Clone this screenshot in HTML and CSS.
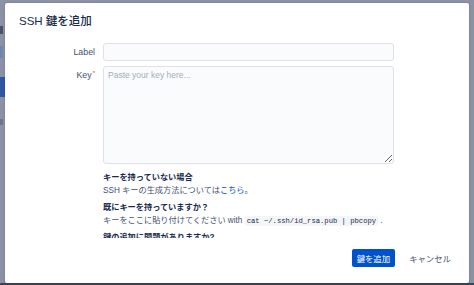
FILE: index.html
```html
<!DOCTYPE html>
<html lang="ja">
<head>
  <meta charset="UTF-8">
  <meta name="viewport" content="width=device-width, initial-scale=1.0">
  <title>SSH 鍵を追加</title>
  <link rel="stylesheet" href="styles.css">
</head>
<body>
  <div class="screen">
    <div class="page-edge">
      <span class="edge-glyph"></span>
      <span class="edge-link"></span>
      <span class="edge-button"></span>
      <span class="edge-glyph small"></span>
    </div>

    <div class="dialog">
      <div class="dialog-header">
        <h2>SSH 鍵を追加</h2>
      </div>

      <div class="dialog-body">
        <form class="key-form">
          <label for="keyLabel">Label</label>
          <input id="keyLabel" type="text">

          <label for="keyText">Key<span class="req">*</span></label>
          <textarea id="keyText" placeholder="Paste your key here..."></textarea>

          <div class="help">
            <p><strong>キーを持っていない場合</strong><br>
              SSH キーの生成方法については<a href="#">こちら</a>。</p>
            <p><strong>既にキーを持っていますか？</strong><br>
              キーをここに貼り付けてください with <code>cat ~/.ssh/id_rsa.pub | pbcopy</code> .</p>
            <p><strong>鍵の追加に問題がありますか?</strong><br>
              詳細についてはトラブルシューティングをご覧ください。</p>
          </div>
        </form>
      </div>

      <div class="dialog-footer">
        <button class="btn primary">鍵を追加</button>
        <button class="btn link">キャンセル</button>
      </div>
    </div>
  </div>
</body>
</html>
```

FILE: styles.css
```css
* { box-sizing: border-box; }
html, body {
  margin: 0;
  height: 100%;
}
body {
  font-family: 'Liberation Sans', 'Noto Sans CJK JP', sans-serif;
  background: #8b92a4;
  color: #172b4d;
  overflow: hidden;
}
.screen {
  display: flex;
  height: 285px;
  border-bottom: 2px solid #3b4456;
}
.page-edge {
  width: 5px;
  display: flex;
  flex-direction: column;
  padding-top: 26px;
}
.edge-glyph {
  display: block;
  width: 3px;
  height: 8px;
  background: #4a5266;
}
.edge-glyph.small {
  margin-top: 22px;
  height: 6px;
  background: #6c7487;
}
.edge-link {
  display: block;
  width: 3px;
  height: 12px;
  margin-top: 12px;
  background: #6f86ad;
}
.edge-button {
  display: block;
  width: 5px;
  height: 20px;
  margin-top: 19px;
  background: #2f57a6;
}
.dialog {
  width: 464px;
  height: 280px;
  margin-top: 3px;
  background: #fff;
  border-radius: 2px;
  box-shadow: 0 0 2px rgba(9, 30, 66, 0.3);
  display: flex;
  flex-direction: column;
}
.dialog-header {
  padding: 11px 14px 0;
  height: 36px;
}
.dialog-header h2 {
  margin: 0;
  font-size: 11.5px;
  line-height: 15px;
  font-weight: 500;
  color: #172b4d;
}
.dialog-body {
  flex: 1;
  overflow: hidden;
  padding: 4px 0 0;
}
.key-form {
  display: grid;
  grid-template-columns: 90px 291px;
  column-gap: 8px;
  row-gap: 5px;
  align-items: start;
}
.key-form label {
  text-align: right;
  font-size: 8.8px;
  line-height: 18px;
  color: #42526e;
}
.key-form label .req {
  color: #de350b;
  font-size: 6px;
  vertical-align: top;
  line-height: 14px;
  margin-left: 1px;
}
.key-form input,
.key-form textarea {
  width: 100%;
  background: #fafbfc;
  border: 1px solid #dfe1e6;
  border-radius: 3px;
  font-family: inherit;
  font-size: 8.5px;
  color: #172b4d;
  margin: 0;
}
.key-form input {
  height: 18px;
  padding: 0 4px;
}
.key-form textarea {
  height: 98px;
  padding: 3px 4px;
  line-height: 11px;
}
.key-form textarea::placeholder {
  color: #a5adba;
}
.help {
  grid-column: 2;
  margin-top: 3px;
  font-size: 8.2px;
  line-height: 12.5px;
  color: #42526e;
}
.help p {
  margin: 0 0 5px;
}
.help strong {
  color: #172b4d;
}
.help a {
  color: #0052cc;
  text-decoration: none;
}
.help code {
  font-family: 'Liberation Mono', monospace;
  font-size: 7.2px;
  background: #f4f5f7;
  color: #172b4d;
  padding: 1px 2px;
  border-radius: 2px;
}
.dialog-footer {
  height: 45px;
  display: flex;
  justify-content: flex-end;
  align-items: flex-start;
  gap: 6px;
  padding: 11px 10px 0 0;
}
.btn {
  height: 18px;
  border: none;
  border-radius: 2px;
  font-family: inherit;
  font-size: 8.4px;
  padding: 0 5px;
  white-space: nowrap;
  cursor: pointer;
}
.btn.primary {
  background: #0052cc;
  color: #fff;
}
.btn.link {
  background: none;
  color: #42526e;
  padding: 0 8px;
}
```
